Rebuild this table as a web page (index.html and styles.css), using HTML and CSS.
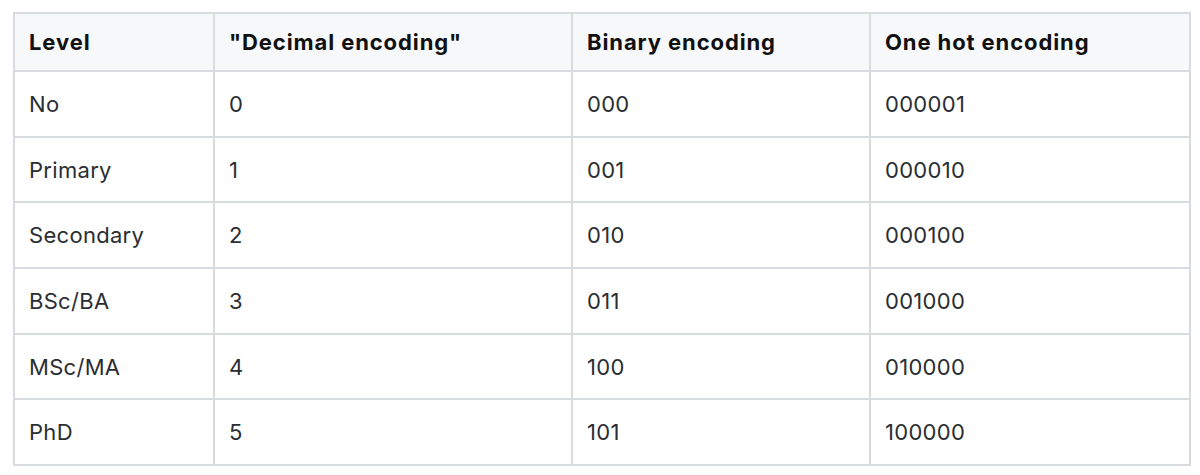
FILE: index.html
```html
<!DOCTYPE html>
<html>
<head>
<meta charset="utf-8">
<link rel="stylesheet" href="styles.css">
</head>
<body>
<table class="enc">
  <colgroup>
    <col class="c1"><col class="c2"><col class="c3"><col class="c4">
  </colgroup>
  <thead>
    <tr><th>Level</th><th>"Decimal encoding"</th><th>Binary encoding</th><th>One hot encoding</th></tr>
  </thead>
  <tbody>
    <tr><td>No</td><td>0</td><td>000</td><td>000001</td></tr>
    <tr><td>Primary</td><td>1</td><td>001</td><td>000010</td></tr>
    <tr><td>Secondary</td><td>2</td><td>010</td><td>000100</td></tr>
    <tr><td>BSc/BA</td><td>3</td><td>011</td><td>001000</td></tr>
    <tr><td>MSc/MA</td><td>4</td><td>100</td><td>010000</td></tr>
    <tr><td>PhD</td><td>5</td><td>101</td><td>100000</td></tr>
  </tbody>
</table>
</body>
</html>
```
FILE: styles.css
```css
html, body {
  margin: 0;
  background: #ffffff;
}
body {
  padding: 12px 0 0 13px;
  font-family: Inter, "Liberation Sans", sans-serif;
  color: #1f2328;
}
.enc {
  border-collapse: collapse;
  table-layout: fixed;
  width: 1176px;
  font-size: 22px;
}
.c1 { width: 200px; }
.c2 { width: 358px; }
.c3 { width: 298px; }
.c4 { width: 320px; }
.enc th, .enc td {
  border: 2px solid #d8dbdf;
  padding: 0 14px;
  text-align: left;
  vertical-align: middle;
}
.enc th {
  height: 56px;
  background: #f6f8fa;
  font-weight: 700;
  letter-spacing: 0.9px;
  color: #111;
}
.enc td {
  height: 63.7px;
  letter-spacing: 0.3px;
  color: #2a2e33;
}
```
